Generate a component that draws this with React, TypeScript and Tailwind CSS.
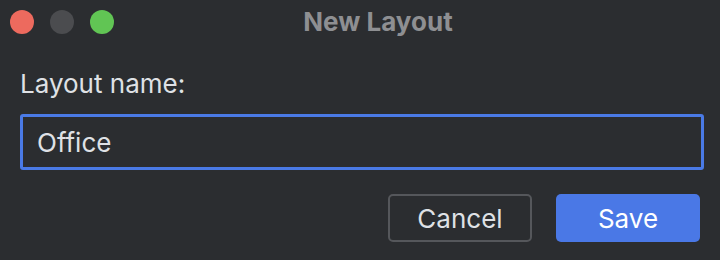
export default function App() {
  return (
    <div className="w-[720px] h-[260px] bg-[#2b2d30] flex flex-col overflow-hidden" style={{ fontFamily: "Inter, 'Noto Sans', sans-serif" }}>
      {/* Title bar */}
      <div className="relative h-[43px] flex items-center px-[10px]">
        <div className="flex gap-[16px]">
          <span className="w-[24px] h-[24px] rounded-full bg-[#ed6a5e]" />
          <span className="w-[24px] h-[24px] rounded-full bg-[#4b4c4f]" />
          <span className="w-[24px] h-[24px] rounded-full bg-[#61c554]" />
        </div>
        <div className="absolute inset-0 flex items-center justify-center pl-[36px] text-[26px] font-bold text-[#8e8f92]">
          New Layout
        </div>
      </div>

      {/* Body */}
      <div className="flex flex-col px-[20px] pt-[26px]">
        <label className="text-[26px] leading-[30px] text-[#dfe1e5]">Layout name:</label>
        <div className="mt-[15px] mr-[-4px] h-[56px] border-[3px] border-[#4a7ae6] rounded-[3px] flex items-center px-[14px]">
          <span className="text-[26px] text-[#dfe1e5]">Office</span>
        </div>
        <div className="flex justify-end gap-[24px] mt-[24px]">
          <button className="w-[144px] h-[48px] rounded-[5px] border-2 border-[#55575b] text-[26px] text-[#dfe1e5]">Cancel</button>
          <button className="w-[144px] h-[48px] rounded-[5px] bg-[#4a78e6] text-[26px] text-white">Save</button>
        </div>
      </div>
    </div>
  );
}
